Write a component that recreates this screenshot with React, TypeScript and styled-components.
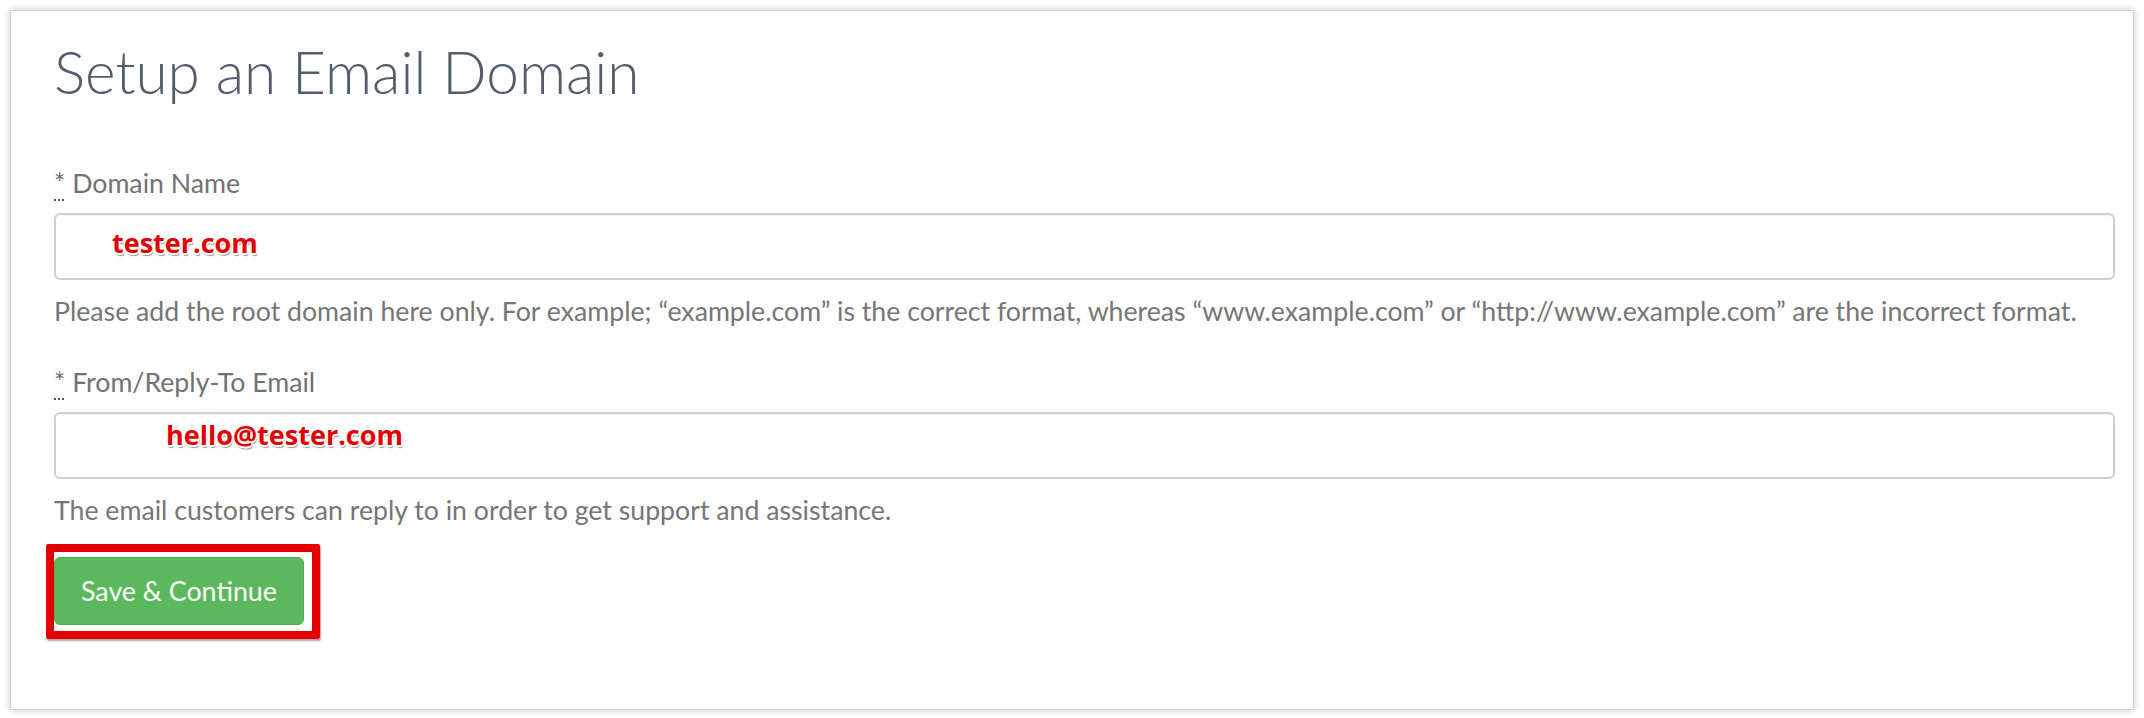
import React from "react";
import styled, { createGlobalStyle } from "styled-components";

const GlobalStyle = createGlobalStyle`
  html, body {
    margin: 0;
    padding: 0;
    background: #ffffff;
  }
  body {
    font-family: Lato, "Liberation Sans", sans-serif;
  }
  * { box-sizing: border-box; }
`;

const Card = styled.section`
  margin: 10px;
  border: 1px solid #d4d4d4;
  background: #ffffff;
  box-shadow: 0 0 7px rgba(0, 0, 0, 0.22);
  padding: 25px 18px 70px 43px;
  display: flex;
  flex-direction: column;
  align-items: stretch;
`;

const Title = styled.h1`
  margin: 0 0 62px 0;
  font-family: Lato, "Liberation Sans", sans-serif;
  font-weight: 300;
  font-size: 58.5px;
  line-height: 70px;
  color: #515d6d;
`;

const Group = styled.div<{ $gapAfter: number }>`
  display: flex;
  flex-direction: column;
  margin-bottom: ${(p) => p.$gapAfter}px;
`;

const Label = styled.label`
  font-family: Lato, "Liberation Sans", sans-serif;
  font-weight: 400;
  font-size: 26.7px;
  line-height: 31px;
  color: #727272;
  margin-bottom: 14px;
`;

const Req = styled.abbr`
  text-decoration: underline dotted #555;
  text-underline-offset: 6px;
  text-decoration-thickness: 2px;
  cursor: help;
`;

const Field = styled.div<{ $indent: number; $top: number }>`
  height: 67px;
  border: 2px solid #cfcfcf;
  border-radius: 6px;
  background: #ffffff;
  padding: ${(p) => p.$top}px 12px 0 ${(p) => p.$indent}px;
  box-shadow: inset 0 1px 1px rgba(0, 0, 0, 0.05);
`;

const Mark = styled.span`
  font-family: "Open Sans", "Noto Sans", sans-serif;
  font-weight: 700;
  font-size: 27px;
  line-height: 32px;
  color: #e00000;
  text-shadow:
    -1px -1px 0 #fff,
    1px -1px 0 #fff,
    -1px 1px 0 #fff,
    1px 1px 0 #fff,
    0 2px 0 #fff,
    1px 3px 1px #9a9a9a;
`;

const Help = styled.p`
  margin: 16px 0 0 0;
  font-family: Lato, "Liberation Sans", sans-serif;
  font-weight: 400;
  font-size: 26.7px;
  line-height: 31px;
  color: #767676;
`;

const Highlight = styled.div`
  align-self: flex-start;
  display: inline-flex;
  margin-left: -8px;
  border: 8px solid #e30000;
  border-radius: 2px;
  padding: 5px 8px 6px 0;
  box-shadow: 1px 2px 2px rgba(0, 0, 0, 0.35);
`;

const Button = styled.button`
  font-family: Lato, "Liberation Sans", sans-serif;
  font-weight: 400;
  font-size: 26.8px;
  line-height: 66px;
  color: #ffffff;
  background: #5cb85c;
  border: 1px solid #4cae4c;
  border-radius: 6px;
  padding: 0 26px;
  cursor: pointer;
`;

export default function App() {
  return (
    <>
      <GlobalStyle />
      <Card>
        <Title>Setup an Email Domain</Title>
        <Group $gapAfter={40}>
          <Label>
            <Req title="required">*</Req> Domain Name
          </Label>
          <Field $indent={56} $top={12}>
            <Mark>tester.com</Mark>
          </Field>
          <Help>
            Please add the root domain here only. For example; “example.com” is the correct format, whereas
            “www.example.com” or “http://www.example.com” are the incorrect format.
          </Help>
        </Group>
        <Group $gapAfter={18}>
          <Label>
            <Req title="required">*</Req> From/Reply-To Email
          </Label>
          <Field $indent={110} $top={5}>
            <Mark>hello@tester.com</Mark>
          </Field>
          <Help>The email customers can reply to in order to get support and assistance.</Help>
        </Group>
        <Highlight>
          <Button type="button">Save &amp; Continue</Button>
        </Highlight>
      </Card>
    </>
  );
}
